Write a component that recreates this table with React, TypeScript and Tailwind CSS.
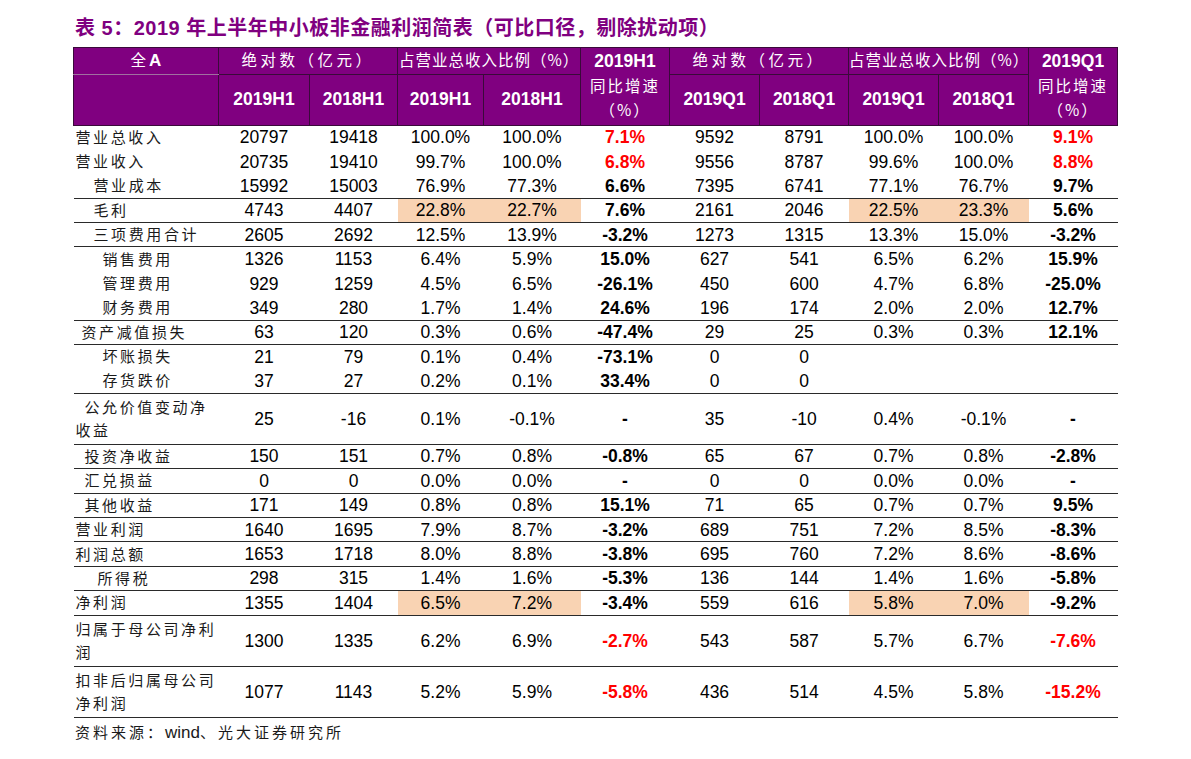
const num = '"Liberation Sans", Arial, "Noto Sans CJK SC", sans-serif';
const cjk = '"Noto Sans CJK SC", "Liberation Sans", sans-serif';

type Row = {
  label: string[];
  indent: number;
  v: string[];
  red?: boolean;
  hl?: boolean;
  line?: boolean;
  tall?: boolean;
};

const rows: Row[] = [
  { label: ["营业总收入"], indent: 0, v: ["20797", "19418", "100.0%", "100.0%", "7.1%", "9592", "8791", "100.0%", "100.0%", "9.1%"], red: true },
  { label: ["营业收入"], indent: 0, v: ["20735", "19410", "99.7%", "100.0%", "6.8%", "9556", "8787", "99.6%", "100.0%", "8.8%"], red: true },
  { label: ["营业成本"], indent: 18, v: ["15992", "15003", "76.9%", "77.3%", "6.6%", "7395", "6741", "77.1%", "76.7%", "9.7%"], line: true },
  { label: ["毛利"], indent: 18, v: ["4743", "4407", "22.8%", "22.7%", "7.6%", "2161", "2046", "22.5%", "23.3%", "5.6%"], hl: true, line: true },
  { label: ["三项费用合计"], indent: 18, v: ["2605", "2692", "12.5%", "13.9%", "-3.2%", "1273", "1315", "13.3%", "15.0%", "-3.2%"], line: true },
  { label: ["销售费用"], indent: 27, v: ["1326", "1153", "6.4%", "5.9%", "15.0%", "627", "541", "6.5%", "6.2%", "15.9%"] },
  { label: ["管理费用"], indent: 27, v: ["929", "1259", "4.5%", "6.5%", "-26.1%", "450", "600", "4.7%", "6.8%", "-25.0%"] },
  { label: ["财务费用"], indent: 27, v: ["349", "280", "1.7%", "1.4%", "24.6%", "196", "174", "2.0%", "2.0%", "12.7%"], line: true },
  { label: ["资产减值损失"], indent: 6, v: ["63", "120", "0.3%", "0.6%", "-47.4%", "29", "25", "0.3%", "0.3%", "12.1%"], line: true },
  { label: ["坏账损失"], indent: 27, v: ["21", "79", "0.1%", "0.4%", "-73.1%", "0", "0", "", "", ""] },
  { label: ["存货跌价"], indent: 27, v: ["37", "27", "0.2%", "0.1%", "33.4%", "0", "0", "", "", ""], line: true },
  { label: ["公允价值变动净", "收益"], indent: 9, v: ["25", "-16", "0.1%", "-0.1%", "-", "35", "-10", "0.4%", "-0.1%", "-"], line: true, tall: true },
  { label: ["投资净收益"], indent: 9, v: ["150", "151", "0.7%", "0.8%", "-0.8%", "65", "67", "0.7%", "0.8%", "-2.8%"], line: true },
  { label: ["汇兑损益"], indent: 9, v: ["0", "0", "0.0%", "0.0%", "-", "0", "0", "0.0%", "0.0%", "-"], line: true },
  { label: ["其他收益"], indent: 9, v: ["171", "149", "0.8%", "0.8%", "15.1%", "71", "65", "0.7%", "0.7%", "9.5%"], line: true },
  { label: ["营业利润"], indent: 0, v: ["1640", "1695", "7.9%", "8.7%", "-3.2%", "689", "751", "7.2%", "8.5%", "-8.3%"], line: true },
  { label: ["利润总额"], indent: 0, v: ["1653", "1718", "8.0%", "8.8%", "-3.8%", "695", "760", "7.2%", "8.6%", "-8.6%"], line: true },
  { label: ["所得税"], indent: 22, v: ["298", "315", "1.4%", "1.6%", "-5.3%", "136", "144", "1.4%", "1.6%", "-5.8%"], line: true },
  { label: ["净利润"], indent: 0, v: ["1355", "1404", "6.5%", "7.2%", "-3.4%", "559", "616", "5.8%", "7.0%", "-9.2%"], hl: true, line: true },
  { label: ["归属于母公司净利", "润"], indent: 0, v: ["1300", "1335", "6.2%", "6.9%", "-2.7%", "543", "587", "5.7%", "6.7%", "-7.6%"], red: true, line: true, tall: true },
  { label: ["扣非后归属母公司", "净利润"], indent: 0, v: ["1077", "1143", "5.2%", "5.9%", "-5.8%", "436", "514", "4.5%", "5.8%", "-15.2%"], red: true, line: true, tall: true },
];

const hlCols = [2, 3, 7, 8];
const growthCols = [4, 9];

function HeadCn({ children, wide }: { children: React.ReactNode; wide?: boolean }) {
  return (
    <span
      className={`text-[15.5px] font-normal whitespace-nowrap ${wide ? "tracking-[3.5px]" : "tracking-[2px]"}`}
      style={{ fontFamily: cjk }}
    >
      {children}
    </span>
  );
}

export default function App() {
  const th = "border border-[#3a0a3a] text-white text-center p-0";
  return (
    <div className="w-[1191px] h-[759px] bg-white pl-[73px] pt-[15px]">
      <div
        className="h-[26px] leading-[26px] text-[20px] font-bold text-[#800080] tracking-[0.5px] pl-[2px]"
        style={{ fontFamily: num }}
      >
        表 5：2019 年上半年中小板非金融利润简表（可比口径，剔除扰动项）
      </div>
      <table className="mt-[6px] table-fixed border-collapse w-[1044px]" style={{ fontFamily: num }}>
        <colgroup>
          <col className="w-[145px]" />
          <col className="w-[91px]" />
          <col className="w-[88px]" />
          <col className="w-[86px]" />
          <col className="w-[97px]" />
          <col className="w-[89px]" />
          <col className="w-[90px]" />
          <col className="w-[89px]" />
          <col className="w-[90px]" />
          <col className="w-[90px]" />
          <col className="w-[89px]" />
        </colgroup>
        <thead className="bg-[#800080]">
          <tr className="h-[26px]">
            <th className={`${th} border-b-[#a070a0] text-[17px] font-bold`}>
              <span className="font-normal text-[15.5px] tracking-[3px]" style={{ fontFamily: cjk }}>全</span>A
            </th>
            <th colSpan={2} className={th}>
              <HeadCn wide>绝对数（亿元）</HeadCn>
            </th>
            <th colSpan={2} className={th}>
              <span className="text-[15.5px] font-normal tracking-[1px] whitespace-nowrap" style={{ fontFamily: cjk }}>
                占营业总收入比例（%）
              </span>
            </th>
            <th rowSpan={2} className={`${th} leading-[23.5px]`}>
              <div className="text-[17.5px] font-bold">2019H1</div>
              <div><HeadCn>同比增速</HeadCn></div>
              <div><HeadCn>（%）</HeadCn></div>
            </th>
            <th colSpan={2} className={th}>
              <HeadCn wide>绝对数（亿元）</HeadCn>
            </th>
            <th colSpan={2} className={th}>
              <span className="text-[15.5px] font-normal tracking-[1px] whitespace-nowrap" style={{ fontFamily: cjk }}>
                占营业总收入比例（%）
              </span>
            </th>
            <th rowSpan={2} className={`${th} leading-[23.5px]`}>
              <div className="text-[17.5px] font-bold">2019Q1</div>
              <div><HeadCn>同比增速</HeadCn></div>
              <div><HeadCn>（%）</HeadCn></div>
            </th>
          </tr>
          <tr className="h-[51px] text-[17.5px] font-bold">
            <th className={`${th} border-t-[#a070a0]`}></th>
            <th className={th}>2019H1</th>
            <th className={th}>2018H1</th>
            <th className={th}>2019H1</th>
            <th className={th}>2018H1</th>
            <th className={th}>2019Q1</th>
            <th className={th}>2018Q1</th>
            <th className={th}>2019Q1</th>
            <th className={th}>2018Q1</th>
          </tr>
        </thead>
        <tbody>
          {rows.map((r, i) => (
            <tr key={i} className={r.tall ? "h-[51px]" : "h-[24.4px]"}>
              <td
                className={`p-0 pl-[2px] text-left align-middle text-[15px] text-[#1a1a1a] tracking-[2.6px] leading-[23px] whitespace-nowrap overflow-hidden ${
                  r.line ? "border-b border-[#2a2a2a]" : ""
                }`}
                style={{ fontFamily: cjk }}
              >
                <div className="-mt-[2px]" style={{ textIndent: r.indent }}>{r.label[0]}</div>
                {r.label[1] && <div>{r.label[1]}</div>}
              </td>
              {r.v.map((val, j) => {
                const growth = growthCols.includes(j);
                return (
                  <td
                    key={j}
                    className={`p-0 text-center align-middle text-[17.5px] leading-[22px] ${
                      r.line ? "border-b border-[#2a2a2a]" : ""
                    } ${r.hl && hlCols.includes(j) ? "bg-[#f9d3b3]" : ""} ${
                      growth ? "font-bold" : ""
                    } ${growth && r.red ? "text-[#ff0000]" : "text-black"}`}
                  >
                    {val}
                  </td>
                );
              })}
            </tr>
          ))}
        </tbody>
      </table>
      <div className="mt-[2px] pl-[2px] text-[15px] tracking-[3px] text-[#1a1a1a] leading-[24px]" style={{ fontFamily: cjk }}>
        资料来源：<span className="text-[17px] tracking-normal" style={{ fontFamily: num }}>wind</span>、光大证券研究所
      </div>
    </div>
  );
}
